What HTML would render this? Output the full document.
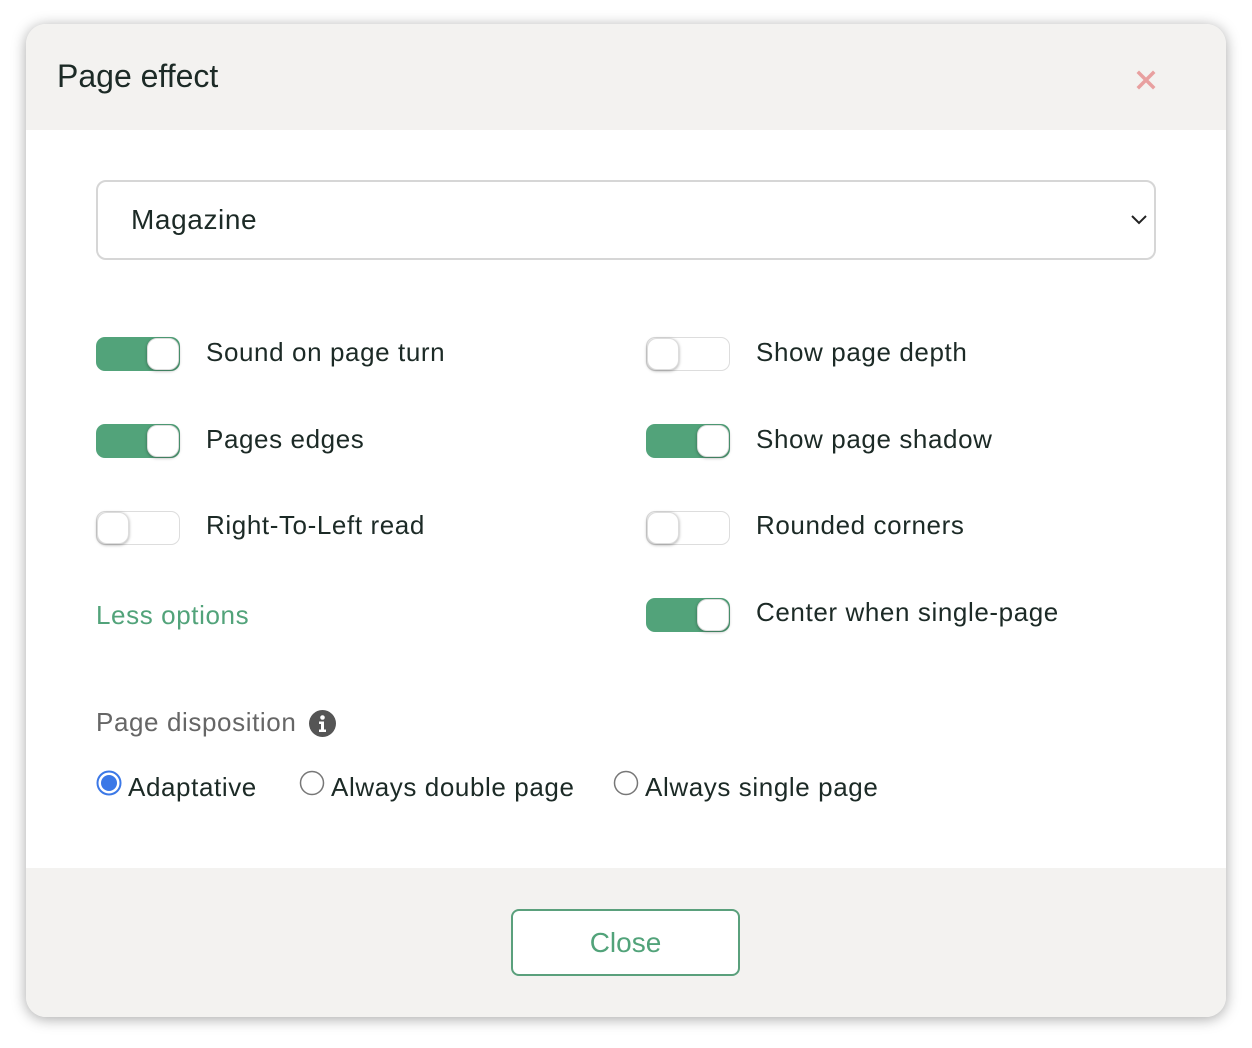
<!DOCTYPE html>
<html><head><meta charset="utf-8"><style>
body{margin:0;width:1252px;height:1048px;background:#fff;font-family:"Liberation Sans",sans-serif;position:relative;overflow:hidden}
.dlg{position:absolute;left:26px;top:24px;width:1200px;height:993px;border-radius:20px;background:#fff;box-shadow:0 2px 14px rgba(0,0,0,.35);overflow:hidden}
.hd{position:absolute;left:0;top:0;width:1200px;height:106px;background:#f3f2f0}
.ft{position:absolute;left:0;top:844px;width:1200px;height:149px;background:#f3f2f0}
.a{position:absolute;white-space:nowrap}
.t{font-size:32px;color:#1c2a26}
.lbl{font-size:26px;color:#1c2a26;line-height:30px;letter-spacing:0.6px}
.tg{position:absolute;width:84px;height:34px;border-radius:9px;box-sizing:border-box}
.tg.on{background:#52a37a}
.tg.off{background:#fff;border:1.5px solid #ddd}
.tg .k{position:absolute;top:1px;width:32px;height:32px;border-radius:10px;background:#fff;box-shadow:0 1px 3px rgba(0,0,0,.35);box-sizing:border-box;border:1px solid #ddd}
.tg.on .k{right:1px}
.tg.off .k{left:0;top:0}
</style></head><body>
<div class="dlg">
<div class="hd"></div>
<div class="ft"></div>
<div class="a t" style="left:31px;top:34px">Page effect</div>
<svg class="a" style="left:1110px;top:46px" width="20" height="20" viewBox="0 0 20 20"><path d="M3 3L17 17M17 3L3 17" stroke="#e8a0a0" stroke-width="3.5" stroke-linecap="square"/></svg>
<div class="a" style="left:70px;top:156px;width:1060px;height:80px;border:2px solid #d6d6d6;border-radius:10px;box-sizing:border-box"></div>
<div class="a lbl" style="left:105px;top:181px;font-size:28px">Magazine</div>
<svg class="a" style="left:1104px;top:190px" width="18" height="12" viewBox="0 0 18 12"><path d="M2 2L9 9L16 2" stroke="#222" stroke-width="2" fill="none"/></svg>

<div class="tg on" style="left:70px;top:313px"><div class="k"></div></div>
<div class="a lbl" style="left:180px;top:313px">Sound on page turn</div>
<div class="tg on" style="left:70px;top:400px"><div class="k"></div></div>
<div class="a lbl" style="left:180px;top:400px">Pages edges</div>
<div class="tg off" style="left:70px;top:487px"><div class="k"></div></div>
<div class="a lbl" style="left:180px;top:486px">Right-To-Left read</div>
<div class="a lbl" style="left:70px;top:576px;color:#52a37a">Less options</div>

<div class="tg off" style="left:620px;top:313px"><div class="k"></div></div>
<div class="a lbl" style="left:730px;top:313px">Show page depth</div>
<div class="tg on" style="left:620px;top:400px"><div class="k"></div></div>
<div class="a lbl" style="left:730px;top:400px">Show page shadow</div>
<div class="tg off" style="left:620px;top:487px"><div class="k"></div></div>
<div class="a lbl" style="left:730px;top:486px">Rounded corners</div>
<div class="tg on" style="left:620px;top:574px"><div class="k"></div></div>
<div class="a lbl" style="left:730px;top:573px">Center when single-page</div>

<div class="a lbl" style="left:70px;top:683px;color:#666">Page disposition</div>
<svg class="a" style="left:283px;top:686px" width="27" height="27" viewBox="0 0 27 27"><circle cx="13.5" cy="13.5" r="13.5" fill="#555"/><circle cx="13.5" cy="7.5" r="2.3" fill="#fff"/><path d="M10 11.5h5v8h2v2.5h-7v-2.5h2v-5.5h-2z" fill="#fff"/></svg>

<svg class="a" style="left:70px;top:746px" width="26" height="26"><circle cx="13" cy="13" r="11.5" fill="#fff" stroke="#3b78e7" stroke-width="2"/><circle cx="13" cy="13" r="8" fill="#3b78e7"/></svg>
<div class="a lbl" style="left:102px;top:748px">Adaptative</div>
<svg class="a" style="left:273px;top:746px" width="26" height="26"><circle cx="13" cy="13" r="11.5" fill="#fff" stroke="#777" stroke-width="1.5"/></svg>
<div class="a lbl" style="left:305px;top:748px">Always double page</div>
<svg class="a" style="left:587px;top:746px" width="26" height="26"><circle cx="13" cy="13" r="11.5" fill="#fff" stroke="#777" stroke-width="1.5"/></svg>
<div class="a lbl" style="left:619px;top:748px">Always single page</div>

<div class="a" style="left:485px;top:885px;width:229px;height:67px;border:2px solid #5aa07c;border-radius:8px;box-sizing:border-box;background:#fff;text-align:center;line-height:63px;font-size:28px;color:#52a37a">Close</div>
</div>
</body></html>
